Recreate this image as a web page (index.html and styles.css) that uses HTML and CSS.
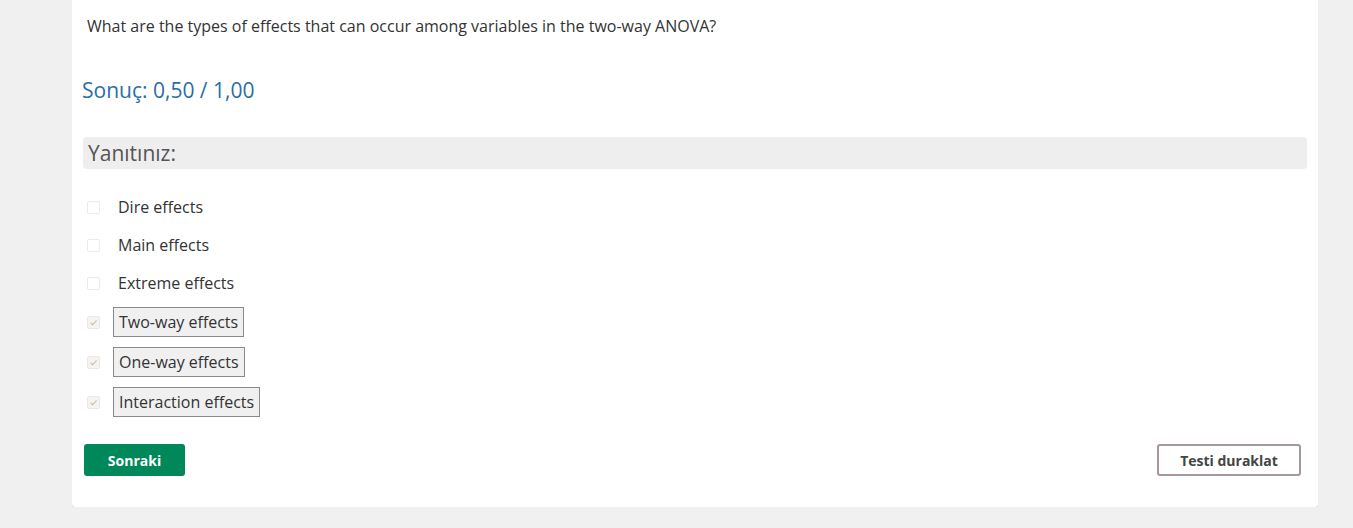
FILE: index.html
```html
<!DOCTYPE html>
<html lang="tr">
<head>
<meta charset="utf-8">
<title>Quiz</title>
<link rel="stylesheet" href="styles.css">
</head>
<body>
<div class="page">
  <div class="card">
    <div class="question">What are the types of effects that can occur among variables in the two-way ANOVA?</div>
    <div class="score">Sonuç: 0,50 / 1,00</div>
    <div class="answer-bar">Yanıtınız:</div>
    <ul class="options">
      <li class="option"><span class="cb"></span><span class="label">Dire effects</span></li>
      <li class="option"><span class="cb"></span><span class="label">Main effects</span></li>
      <li class="option"><span class="cb"></span><span class="label">Extreme effects</span></li>
      <li class="option"><span class="cb checked"><svg viewBox="0 0 13 13" width="13" height="13"><path d="M3.5 6.8 L5.6 8.8 L9.6 4.4" fill="none" stroke="#c9c6c2" stroke-width="1.3"/></svg></span><span class="label selected">Two-way effects</span></li>
      <li class="option"><span class="cb checked"><svg viewBox="0 0 13 13" width="13" height="13"><path d="M3.5 6.8 L5.6 8.8 L9.6 4.4" fill="none" stroke="#c9c6c2" stroke-width="1.3"/></svg></span><span class="label selected">One-way effects</span></li>
      <li class="option"><span class="cb checked"><svg viewBox="0 0 13 13" width="13" height="13"><path d="M3.5 6.8 L5.6 8.8 L9.6 4.4" fill="none" stroke="#c9c6c2" stroke-width="1.3"/></svg></span><span class="label selected">Interaction effects</span></li>
    </ul>
    <div class="footer">
      <button class="btn btn-next">Sonraki</button>
      <button class="btn btn-pause">Testi duraklat</button>
    </div>
  </div>
</div>
</body>
</html>
```
FILE: styles.css
```css
html, body {
  margin: 0;
  padding: 0;
  background: #f0f0f0;
  font-family: "Open Sans", "Noto Sans", sans-serif;
  color: #333;
}
.page {
  padding-left: 72px;
  width: 1246px;
}
.card {
  background: #fff;
  border-radius: 0 0 4px 4px;
  box-shadow: 0 3px 0 #e2e2e2;
  padding: 16px 11px 31px 11px;
  width: 1224px;
}
.question {
  font-size: 16px;
  line-height: 20px;
  padding-left: 4px;
  color: #333;
}
.score {
  margin-top: 41px;
  font-size: 21px;
  line-height: 26px;
  color: #2a6ea6;
  margin-left: -1px;
}
.answer-bar {
  margin-top: 34px;
  height: 32px;
  line-height: 32px;
  background: #eeeeee;
  border-radius: 4px;
  font-size: 21px;
  color: #555;
  padding-left: 5px;
}
.options {
  list-style: none;
  margin: 24px 0 0 0;
  padding: 0 0 0 4px;
}
.option {
  display: flex;
  align-items: center;
  margin-bottom: 10px;
}
.option:last-child {
  margin-bottom: 0;
}
.cb {
  width: 11px;
  height: 11px;
  border: 1px solid #ebebeb;
  border-radius: 2px;
  background: #fff;
  position: relative;
  flex: none;
}
.cb.checked {
  background: #f7f4f0;
  border-color: #ece8e3;
}
.cb svg {
  position: absolute;
  left: -1px;
  top: -1px;
}
.label {
  margin-left: 13px;
  font-size: 16px;
  line-height: 20px;
  padding: 4px 5px;
  color: #333;
}
.label.selected {
  background: #f0f0f0;
  border: 1px solid #8a8a8a;
  padding: 4px 5px;
}
.footer {
  margin-top: 27px;
  display: flex;
  justify-content: space-between;
  padding: 0 6px 0 1px;
}
.btn {
  height: 32px;
  border-radius: 3px;
  font-family: "Open Sans", "Noto Sans", sans-serif;
  font-weight: 700;
  font-size: 14px;
  cursor: pointer;
}
.btn-next {
  width: 101px;
  background: #00875a;
  color: #fff;
  border: none;
}
.btn-pause {
  width: 144px;
  background: #fff;
  color: #444;
  border: 2px solid #a5969f;
}
```
